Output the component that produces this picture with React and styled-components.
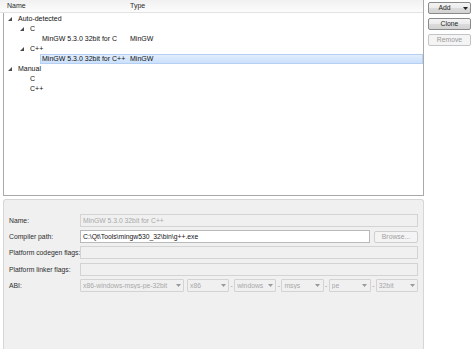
import React from 'react'
import styled, { createGlobalStyle } from 'styled-components'

const GlobalStyle = createGlobalStyle`
  html, body {
    margin: 0;
    padding: 0;
    background: #ffffff;
  }
  body {
    font-family: "Liberation Sans", Arial, sans-serif;
    font-size: 7px;
    color: #111111;
  }
`

const PAGE = styled.div`
  width: 474px;
  height: 349px;
  overflow: hidden;
  display: flex;
  flex-direction: column;
`

const TOP = styled.div`
  display: flex;
  height: 197px;
`

const TREE = styled.div`
  margin-left: 3px;
  width: 421px;
  height: 196px;
  box-sizing: border-box;
  border: 1px solid #a9a9a9;
  border-top: none;
  background: #ffffff;
  display: flex;
  flex-direction: column;
`

const HEADER = styled.div`
  height: 12px;
  line-height: 12px;
  border-bottom: 1px solid #e2e2e2;
  background: linear-gradient(#f1f1f1, #fcfcfc);
  display: flex;
  color: #2a2a2a;
  margin-left: -4px;
  padding-left: 7px;
`

const HEADCELL = styled.div`
  width: ${p => p.width || 'auto'};
`

const ROWS = styled.div`
  padding-top: 1px;
  display: flex;
  flex-direction: column;
`

const ROW = styled.div`
  height: 10px;
  display: flex;
  padding-left: ${p => p.level * 12}px;
`

const EXPANDER = styled.div`
  width: 12px;
  display: flex;
  align-items: center;
  justify-content: flex-end;
  padding-right: 4px;
  box-sizing: border-box;
`

const ITEM = styled.div`
  flex: 1;
  display: flex;
  align-items: center;
  box-sizing: border-box;
  padding-left: 2px;
  line-height: 10px;
  ${p => p.selected && `
    background: linear-gradient(#e4effd, #c9dffb);
    box-shadow: inset 0 0 0 1px #b5d0f3;
  `}
`

const LABEL = styled.div`
  width: ${p => 112 - p.level * 12}px;
  white-space: nowrap;
`

const SIDE = styled.div`
  margin-left: 4px;
  width: 43px;
  padding-top: 2px;
  display: flex;
  flex-direction: column;
  gap: 4px;
`

const BUTTON = styled.div`
  height: 12px;
  box-sizing: border-box;
  border: 1px solid ${p => p.disabled ? '#c2c5c8' : '#8a8a8a'};
  border-radius: 2px;
  background: ${p => p.disabled ? '#f4f4f4' : 'linear-gradient(#f4f4f4 0%, #ebebeb 50%, #dcdcdc 51%, #d2d2d2 100%)'};
  color: ${p => p.disabled ? '#9a9a9a' : '#1e1e1e'};
  display: flex;
  align-items: center;
  font-size: 6.8px;
  line-height: 10px;
`

const BUTTONTEXT = styled.div`
  flex: 1;
  text-align: center;
`

const MENUARROW = styled.div`
  width: 10px;
  display: flex;
  align-items: center;
  justify-content: center;
`

const PANEL = styled.div`
  margin-top: 2px;
  margin-left: 3px;
  width: 421px;
  box-sizing: border-box;
  flex: 1;
  border: 1px solid #d6d6d6;
  border-bottom: none;
  border-radius: 3px 3px 0 0;
  background: #f0f0f0;
  padding: 14px 4px 0 4px;
  display: grid;
  grid-template-columns: 72px 1fr;
  grid-auto-rows: 13px;
  row-gap: 3.2px;
  align-content: start;
  font-size: 6.8px;
`

const FORMLABEL = styled.div`
  display: flex;
  align-items: center;
  padding-left: 1px;
  color: #2e2e2e;
  white-space: nowrap;
`

const FIELDROW = styled.div`
  display: flex;
  align-items: center;
  gap: ${p => p.gap || 0}px;
  margin-right: ${p => p.right || 0}px;
`

const FIELD = styled.div`
  flex: 1;
  height: 13px;
  box-sizing: border-box;
  border: 1px solid ${p => p.enabled ? '#b9b9b9' : '#d3d3d3'};
  background: ${p => p.enabled ? '#ffffff' : '#f0f0f0'};
  color: ${p => p.enabled ? '#141414' : '#a8a8a8'};
  padding-left: 2px;
  line-height: 11px;
  white-space: nowrap;
  overflow: hidden;
`

const BROWSE = styled.div`
  width: 44px;
  height: 12px;
  box-sizing: border-box;
  border: 1px solid #cfcfcf;
  border-radius: 2px;
  background: #f4f4f4;
  color: #a0a0a0;
  text-align: center;
  line-height: 10px;
  margin-right: 1px;
`

const COMBO = styled.div`
  flex: ${p => p.fixed ? `0 0 ${p.fixed}px` : '1'};
  margin-right: ${p => p.fixed ? 3 : 0}px;
  height: 13px;
  box-sizing: border-box;
  border: 1px solid #d3d3d3;
  border-radius: 1px;
  background: #f0f0f0;
  color: #a8a8a8;
  display: flex;
  align-items: center;
  padding-left: 2px;
  white-space: nowrap;
`

const COMBOTEXT = styled.div`
  flex: 1;
  overflow: hidden;
`

const COMBOARROW = styled.div`
  width: 10px;
  display: flex;
  align-items: center;
  justify-content: center;
`

const DASH = styled.div`
  width: 5px;
  text-align: center;
  color: #9a9a9a;
`

function Triangle() {
  return (
    <svg width="4" height="4" viewBox="0 0 4 4">
      <polygon points="4,0 4,4 0,4" fill="#4a4a4a" />
    </svg>
  )
}

function DownArrow({ color }) {
  return (
    <svg width="5" height="3" viewBox="0 0 5 3">
      <polygon points="0,0 5,0 2.5,3" fill={color} />
    </svg>
  )
}

const tree = [
  { level: 0, name: 'Auto-detected', open: true },
  { level: 1, name: 'C', open: true },
  { level: 2, name: 'MinGW 5.3.0 32bit for C', type: 'MinGW' },
  { level: 1, name: 'C++', open: true },
  { level: 2, name: 'MinGW 5.3.0 32bit for C++', type: 'MinGW', selected: true },
  { level: 0, name: 'Manual', open: true },
  { level: 1, name: 'C' },
  { level: 1, name: 'C++' },
]

const abiParts = ['x86', 'windows', 'msys', 'pe', '32bit']

export default function App() {
  return (
    <PAGE>
      <GlobalStyle />
      <TOP>
        <TREE>
          <HEADER>
            <HEADCELL width="123px">Name</HEADCELL>
            <HEADCELL>Type</HEADCELL>
          </HEADER>
          <ROWS>
            {tree.map((node, i) => (
              <ROW key={['node', i].join('_')} level={node.level}>
                <EXPANDER>{node.open && <Triangle />}</EXPANDER>
                <ITEM selected={node.selected}>
                  <LABEL level={node.level}>{node.name}</LABEL>
                  {node.type && <div>{node.type}</div>}
                </ITEM>
              </ROW>
            ))}
          </ROWS>
        </TREE>
        <SIDE>
          <BUTTON>
            <BUTTONTEXT>Add</BUTTONTEXT>
            <MENUARROW><DownArrow color="#222" /></MENUARROW>
          </BUTTON>
          <BUTTON>
            <BUTTONTEXT>Clone</BUTTONTEXT>
          </BUTTON>
          <BUTTON disabled>
            <BUTTONTEXT>Remove</BUTTONTEXT>
          </BUTTON>
        </SIDE>
      </TOP>
      <PANEL>
        <FORMLABEL>Name:</FORMLABEL>
        <FIELDROW right={1}>
          <FIELD>MinGW 5.3.0 32bit for C++</FIELD>
        </FIELDROW>

        <FORMLABEL>Compiler path:</FORMLABEL>
        <FIELDROW gap={4}>
          <FIELD enabled>C:\Qt\Tools\mingw530_32\bin\g++.exe</FIELD>
          <BROWSE>Browse...</BROWSE>
        </FIELDROW>

        <FORMLABEL>Platform codegen flags:</FORMLABEL>
        <FIELDROW right={1}>
          <FIELD />
        </FIELDROW>

        <FORMLABEL>Platform linker flags:</FORMLABEL>
        <FIELDROW right={1}>
          <FIELD />
        </FIELDROW>

        <FORMLABEL>ABI:</FORMLABEL>
        <FIELDROW right={1}>
          <COMBO fixed={104}>
            <COMBOTEXT>x86-windows-msys-pe-32bit</COMBOTEXT>
            <COMBOARROW><DownArrow color="#9a9a9a" /></COMBOARROW>
          </COMBO>
          {abiParts.map((part, i) => (
            <React.Fragment key={['abi', part].join('_')}>
              {i > 0 && <DASH>-</DASH>}
              <COMBO>
                <COMBOTEXT>{part}</COMBOTEXT>
                <COMBOARROW><DownArrow color="#9a9a9a" /></COMBOARROW>
              </COMBO>
            </React.Fragment>
          ))}
        </FIELDROW>
      </PANEL>
    </PAGE>
  )
}
